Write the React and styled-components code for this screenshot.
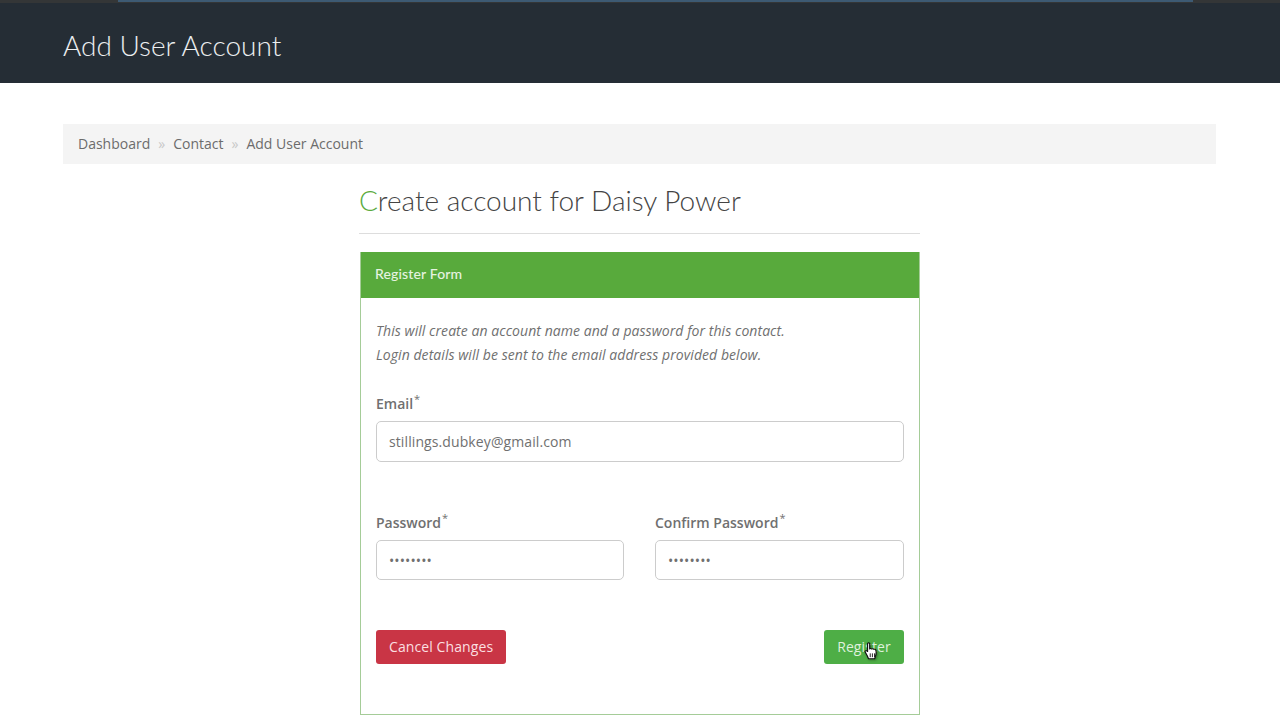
import React from 'react';
import styled, { createGlobalStyle } from 'styled-components';

const GlobalStyle = createGlobalStyle`
  html, body {
    margin: 0;
    padding: 0;
    height: 720px;
    overflow: hidden;
    background: #fff;
    font-family: 'Open Sans', 'Liberation Sans', sans-serif;
    color: #666;
  }
  * {
    box-sizing: border-box;
  }
`;

const TopStrip = styled.div`
  height: 3px;
  background: #343637;
  padding: 0 87px 0 118px;
  div {
    height: 2px;
    background: #3d5a73;
  }
`;

const Banner = styled.header`
  height: 80px;
  background: #252d35;
  padding: 0 63px;
  display: flex;
  align-items: center;
  h1 {
    margin: 4px 0 0;
    font-family: 'Lato', sans-serif;
    font-weight: 300;
    font-size: 28px;
    color: #eceef0;
  }
`;

const Breadcrumb = styled.nav`
  margin: 41px 64px 0 63px;
  height: 40px;
  padding: 0 15px 2px;
  background: #f4f4f4;
  display: flex;
  align-items: center;
  font-size: 14px;
  color: #6c6c6c;
  span {
    color: #c8c8c8;
    margin: 0 8px;
  }
`;

const Column = styled.main`
  width: 560px;
  margin: 0 auto;
`;

const Heading = styled.h2`
  margin: 0 0 0 -1px;
  height: 70px;
  padding-top: 18px;
  border-bottom: 1px solid #ddd;
  font-family: 'Lato', sans-serif;
  font-weight: 300;
  font-size: 28px;
  line-height: 36px;
  color: #444;
  white-space: nowrap;
  &::first-letter {
    color: #5aaa3c;
  }
`;

const Panel = styled.section`
  margin-top: 18px;
  height: 463px;
  border: 1px solid #a5cc98;
`;

const PanelHead = styled.div`
  height: 46px;
  margin-top: -1px;
  padding: 0 14px 3px;
  background: #58aa3c;
  display: flex;
  align-items: center;
  font-family: 'Lato', 'Open Sans', sans-serif;
  font-size: 14px;
  font-weight: 500;
  letter-spacing: 0.15px;
  color: #e6f3e0;
`;

const PanelBody = styled.div`
  padding: 21px 15px 0;
`;

const Note = styled.p`
  margin: 0 0 25px;
  font-size: 14px;
  font-style: italic;
  line-height: 24px;
  letter-spacing: 0.06px;
  color: #707070;
`;

const Row = styled.div`
  display: grid;
  grid-template-columns: ${(p) => (p.$split ? '248px 249px' : '1fr')};
  column-gap: 31px;
  margin-bottom: ${(p) => (p.$split ? '50px' : '49px')};
  input {
    height: ${(p) => (p.$split ? '40px' : '41px')};
  }
`;

const Label = styled.label`
  display: block;
  height: 24px;
  font-size: 14px;
  font-weight: 600;
  line-height: 24px;
  color: #707070;
  sup {
    font-size: 11px;
    font-weight: 400;
    line-height: 0;
    margin-left: 1px;
  }
`;

const Input = styled.input`
  display: block;
  width: 100%;
  margin-top: 5px;
  padding: 0 12px;
  border: 1px solid #ccc;
  border-radius: 5px;
  background: #fff;
  font-family: 'Open Sans', sans-serif;
  font-size: 14px;
  letter-spacing: 0.1px;
  color: #707070;
  outline: none;
`;

const Actions = styled.div`
  display: flex;
  justify-content: space-between;
`;

const Button = styled.button`
  position: relative;
  height: 34px;
  min-width: 80px;
  padding: 0 13px 2px;
  border: none;
  border-radius: 3px;
  background: ${(p) => (p.$danger ? '#c93545' : '#4eae46')};
  color: ${(p) => (p.$danger ? '#fbdfe0' : '#dff1dc')};
  font-family: 'Open Sans', sans-serif;
  font-size: 14px;
  letter-spacing: 0.1px;
`;

const Pointer = styled.svg`
  position: absolute;
  left: 40px;
  top: 12px;
  width: 14px;
  height: 18px;
  filter: drop-shadow(1px 1px 1px rgba(0, 0, 0, 0.35));
`;

const Field = ({ label, type = 'text', value }) => (
  <div>
    <Label>
      {label}
      <sup>*</sup>
    </Label>
    <Input type={type} defaultValue={value} readOnly />
  </div>
);

export default function App() {
  return (
    <>
      <GlobalStyle />
      <TopStrip>
        <div />
      </TopStrip>
      <Banner>
        <h1>Add User Account</h1>
      </Banner>
      <Breadcrumb>
        Dashboard<span>»</span>Contact<span>»</span>Add User Account
      </Breadcrumb>
      <Column>
        <Heading>Create account for Daisy Power</Heading>
        <Panel>
          <PanelHead>Register Form</PanelHead>
          <PanelBody>
            <Note>
              This will create an account name and a password for this contact.
              <br />
              Login details will be sent to the email address provided below.
            </Note>
            <Row>
              <Field label="Email" value="stillings.dubkey@gmail.com" />
            </Row>
            <Row $split>
              <Field label="Password" type="password" value="password" />
              <Field label="Confirm Password" type="password" value="password" />
            </Row>
            <Actions>
              <Button $danger>Cancel Changes</Button>
              <Button>
                Register
                <Pointer viewBox="0 0 13 19" preserveAspectRatio="none">
                  <path
                    d="M3.5 1.2c.8-.6 1.8 0 1.8 1v5.2c.4-.6 1.5-.6 1.9.1.4-.5 1.5-.5 1.9.3.5-.4 1.5-.2 1.8.6.6 2 .5 4.6-.5 7.3l-.5 2H4.2L3 14.5 1.1 10.6c-.5-1 .6-2 1.6-1.2l.6.7V2.2c0-.4 0-.8.2-1z"
                    fill="#fff"
                    stroke="#111"
                    strokeWidth="1.1"
                    strokeLinejoin="round"
                  />
                  <path d="M5.8 12v4M7.8 12v4M9.8 12v4" stroke="#111" strokeWidth="0.9" />
                </Pointer>
              </Button>
            </Actions>
          </PanelBody>
        </Panel>
      </Column>
    </>
  );
}
